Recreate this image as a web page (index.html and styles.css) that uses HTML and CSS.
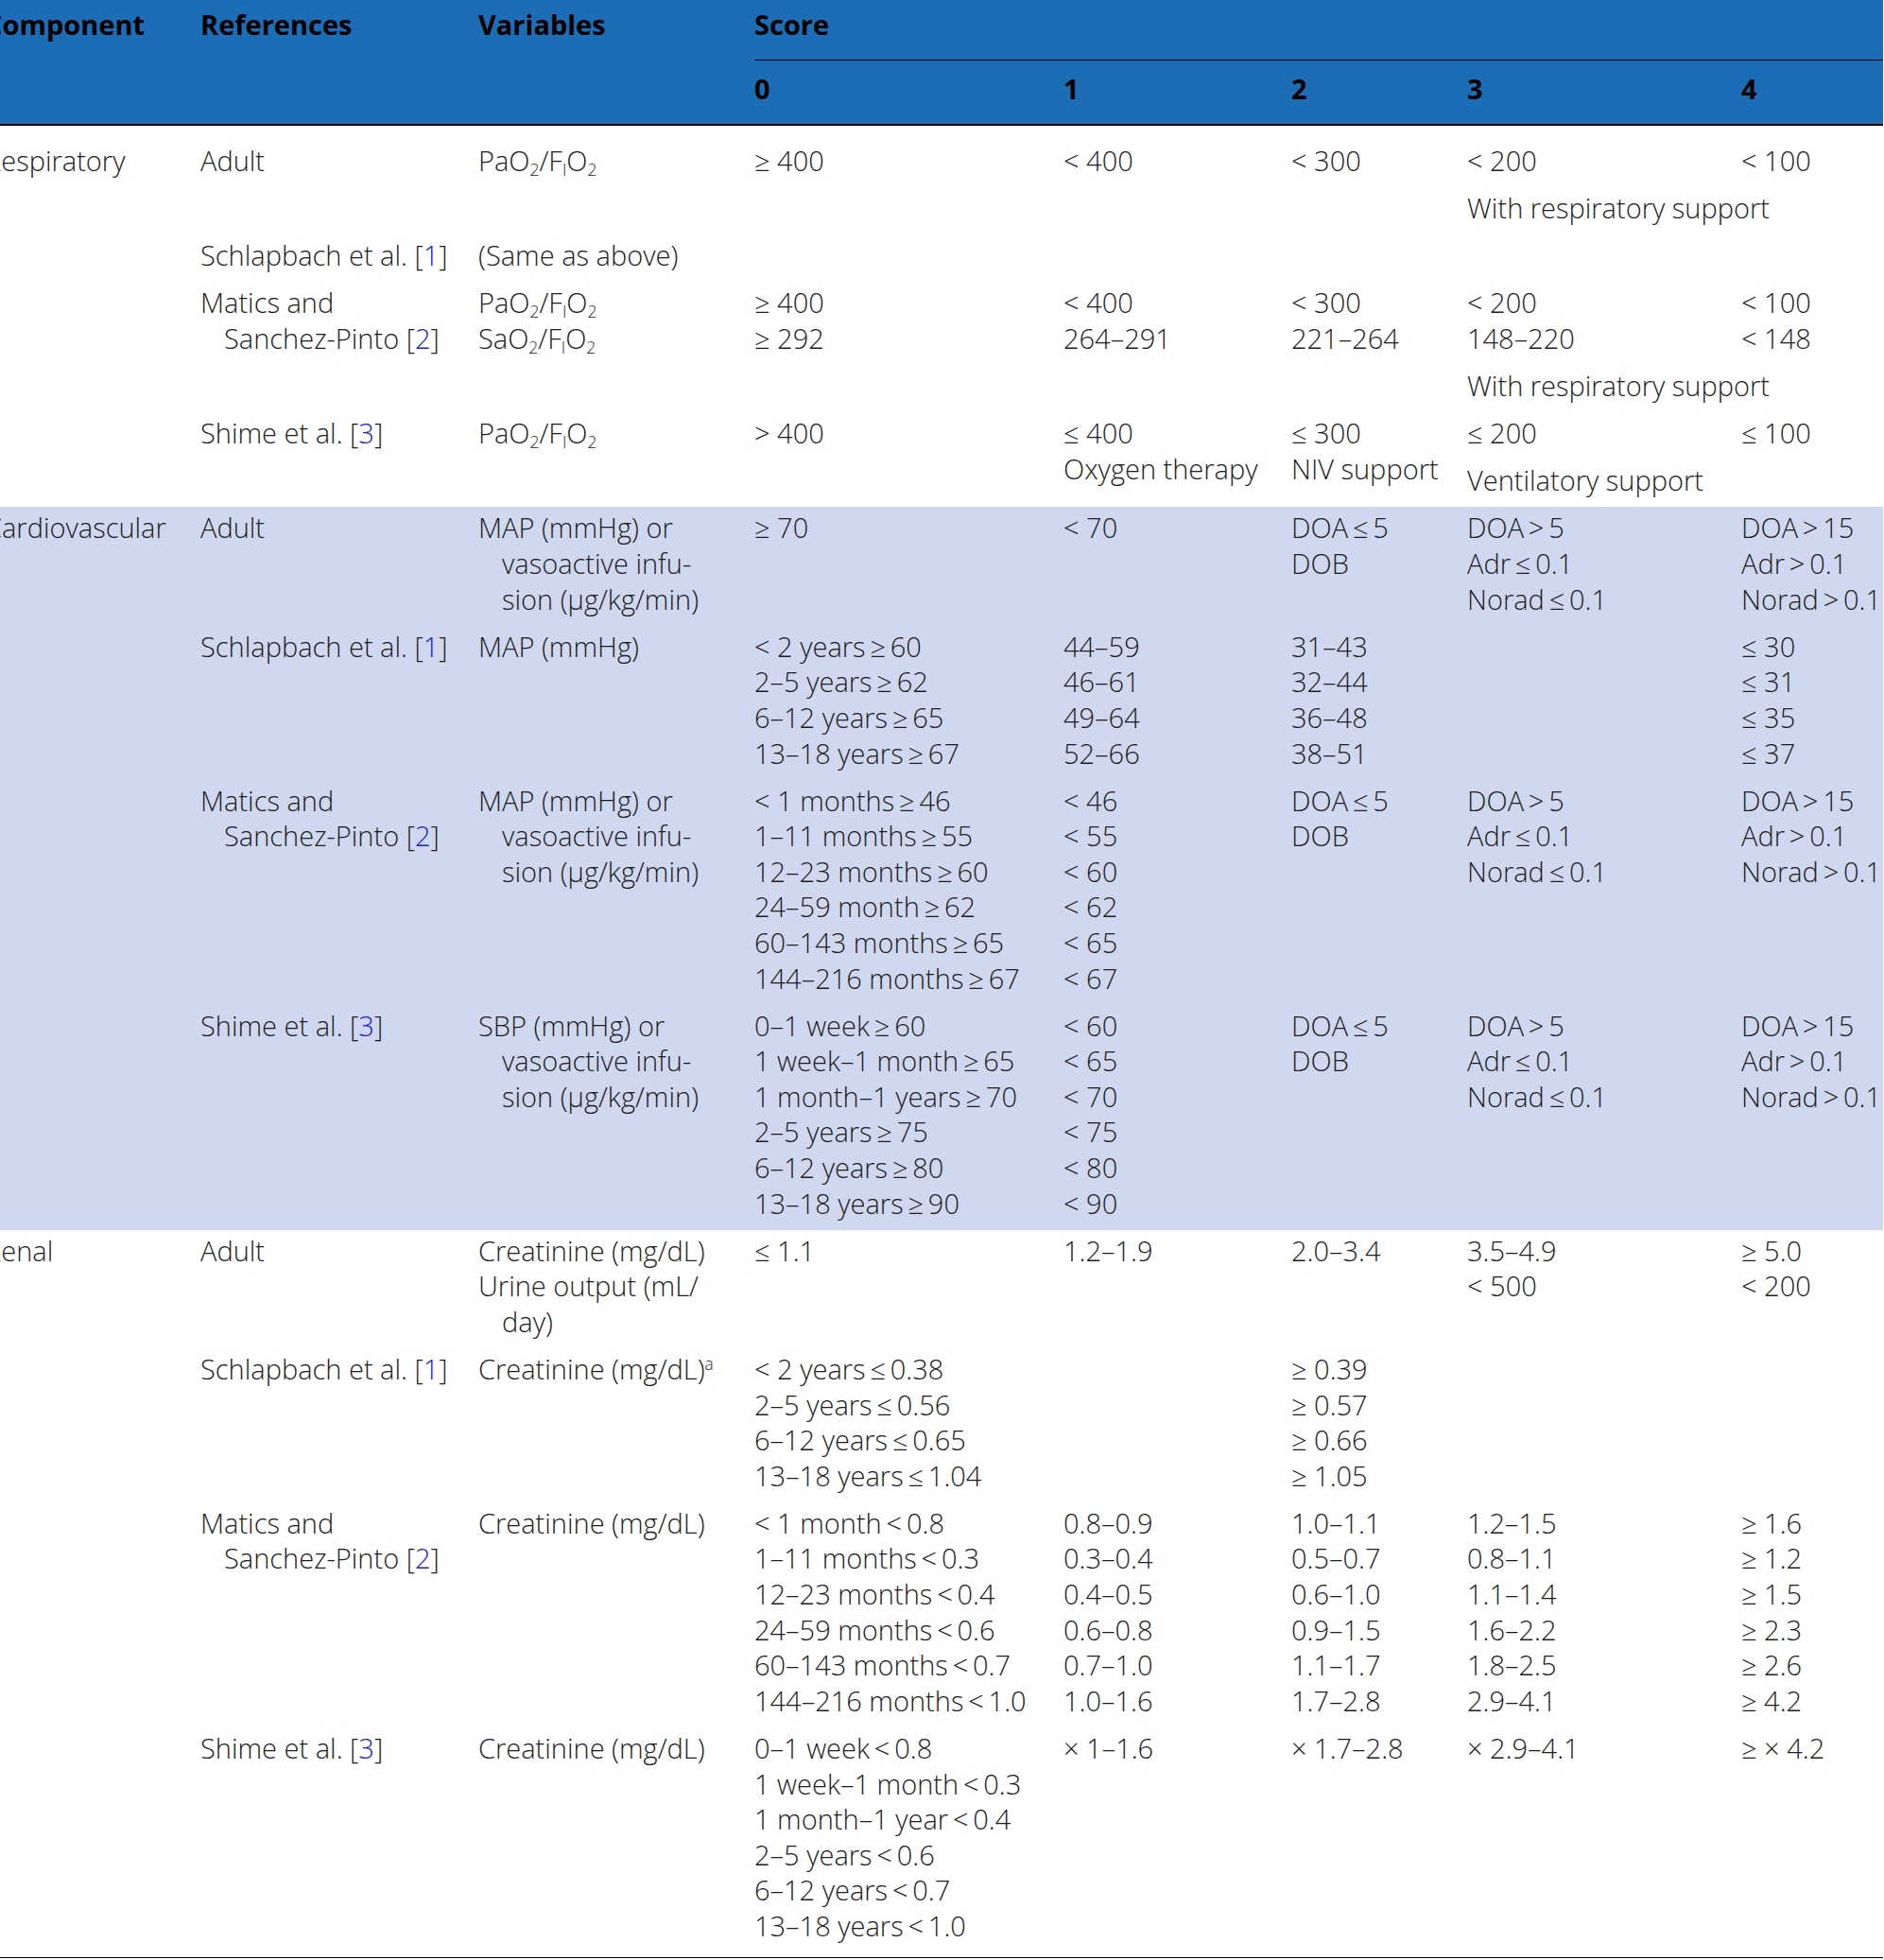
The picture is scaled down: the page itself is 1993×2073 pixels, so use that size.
FILE: index.html
```html
<!DOCTYPE html>
<html lang="en">
<head>
<meta charset="utf-8">
<title>Organ dysfunction scores</title>
<link rel="stylesheet" href="styles.css">
</head>
<body>
<table class="tbl">
  <colgroup>
    <col class="c-comp"><col class="c-ref"><col class="c-var"><col class="c-s0"><col class="c-s1"><col class="c-s2"><col class="c-s3"><col class="c-s4">
  </colgroup>
  <thead>
    <tr class="hr1">
      <th rowspan="2">Component</th>
      <th rowspan="2">References</th>
      <th rowspan="2">Variables</th>
      <th colspan="5" class="score">Score</th>
    </tr>
    <tr class="hr2">
      <th>0</th><th>1</th><th>2</th><th>3</th><th>4</th>
    </tr>
  </thead>
  <tbody>
    <!-- Respiratory -->
    <tr class="first">
      <td rowspan="7">Respiratory</td>
      <td>Adult</td>
      <td>PaO<sub class="s">2</sub>/F<sub class="s">I</sub>O<sub class="s">2</sub></td>
      <td><span class="op">≥</span> 400</td><td>&lt; 400</td><td>&lt; 300</td><td>&lt; 200</td><td>&lt; 100</td>
    </tr>
    <tr>
      <td></td><td></td><td></td><td></td><td></td>
      <td colspan="2">With respiratory support</td>
    </tr>
    <tr>
      <td>Schlapbach et al. [<span class="lk">1</span>]</td>
      <td>(Same as above)</td>
      <td></td><td></td><td></td><td></td><td></td>
    </tr>
    <tr>
      <td><div class="h">Matics and<br>Sanchez-Pinto [<span class="lk">2</span>]</div></td>
      <td>PaO<sub class="s">2</sub>/F<sub class="s">I</sub>O<sub class="s">2</sub><br>SaO<sub class="s">2</sub>/F<sub class="s">I</sub>O<sub class="s">2</sub></td>
      <td><span class="op">≥</span> 400<br><span class="op">≥</span> 292</td>
      <td>&lt; 400<br>264–291</td>
      <td>&lt; 300<br>221–264</td>
      <td>&lt; 200<br>148–220</td>
      <td>&lt; 100<br>&lt; 148</td>
    </tr>
    <tr>
      <td></td><td></td><td></td><td></td><td></td>
      <td colspan="2">With respiratory support</td>
    </tr>
    <tr>
      <td rowspan="2">Shime et al. [<span class="lk">3</span>]</td>
      <td rowspan="2">PaO<sub class="s">2</sub>/F<sub class="s">I</sub>O<sub class="s">2</sub></td>
      <td rowspan="2">&gt; 400</td>
      <td rowspan="2"><span class="op">≤</span> 400<br>Oxygen therapy</td>
      <td rowspan="2"><span class="op">≤</span> 300<br>NIV support</td>
      <td><span class="op">≤</span> 200</td>
      <td><span class="op">≤</span> 100</td>
    </tr>
    <tr>
      <td colspan="2">Ventilatory support</td>
    </tr>

    <!-- Cardiovascular -->
    <tr class="band">
      <td rowspan="4">Cardiovascular</td>
      <td>Adult</td>
      <td><div class="h">MAP (mmHg) or<br>vasoactive infu-<br>sion (µg/kg/min)</div></td>
      <td><span class="op">≥</span> 70</td>
      <td>&lt; 70</td>
      <td>DOA&thinsp;<span class="op">≤</span>&thinsp;5<br>DOB</td>
      <td>DOA&thinsp;&gt;&thinsp;5<br>Adr&thinsp;<span class="op">≤</span>&thinsp;0.1<br>Norad&thinsp;<span class="op">≤</span>&thinsp;0.1</td>
      <td>DOA&thinsp;&gt;&thinsp;15<br>Adr&thinsp;&gt;&thinsp;0.1<br>Norad&thinsp;&gt;&thinsp;0.1</td>
    </tr>
    <tr class="band">
      <td>Schlapbach et al. [<span class="lk">1</span>]</td>
      <td>MAP (mmHg)</td>
      <td>&lt; 2 years&thinsp;<span class="op">≥</span>&thinsp;60<br>2–5 years&thinsp;<span class="op">≥</span>&thinsp;62<br>6–12 years&thinsp;<span class="op">≥</span>&thinsp;65<br>13–18 years&thinsp;<span class="op">≥</span>&thinsp;67</td>
      <td>44–59<br>46–61<br>49–64<br>52–66</td>
      <td>31–43<br>32–44<br>36–48<br>38–51</td>
      <td></td>
      <td><span class="op">≤</span> 30<br><span class="op">≤</span> 31<br><span class="op">≤</span> 35<br><span class="op">≤</span> 37</td>
    </tr>
    <tr class="band">
      <td><div class="h">Matics and<br>Sanchez-Pinto [<span class="lk">2</span>]</div></td>
      <td><div class="h">MAP (mmHg) or<br>vasoactive infu-<br>sion (µg/kg/min)</div></td>
      <td>&lt; 1 months&thinsp;<span class="op">≥</span>&thinsp;46<br>1–11 months&thinsp;<span class="op">≥</span>&thinsp;55<br>12–23 months&thinsp;<span class="op">≥</span>&thinsp;60<br>24–59 month&thinsp;<span class="op">≥</span>&thinsp;62<br>60–143 months&thinsp;<span class="op">≥</span>&thinsp;65<br>144–216 months&thinsp;<span class="op">≥</span>&thinsp;67</td>
      <td>&lt; 46<br>&lt; 55<br>&lt; 60<br>&lt; 62<br>&lt; 65<br>&lt; 67</td>
      <td>DOA&thinsp;<span class="op">≤</span>&thinsp;5<br>DOB</td>
      <td>DOA&thinsp;&gt;&thinsp;5<br>Adr&thinsp;<span class="op">≤</span>&thinsp;0.1<br>Norad&thinsp;<span class="op">≤</span>&thinsp;0.1</td>
      <td>DOA&thinsp;&gt;&thinsp;15<br>Adr&thinsp;&gt;&thinsp;0.1<br>Norad&thinsp;&gt;&thinsp;0.1</td>
    </tr>
    <tr class="band">
      <td>Shime et al. [<span class="lk">3</span>]</td>
      <td><div class="h">SBP (mmHg) or<br>vasoactive infu-<br>sion (µg/kg/min)</div></td>
      <td>0–1 week&thinsp;<span class="op">≥</span>&thinsp;60<br>1 week–1 month&thinsp;<span class="op">≥</span>&thinsp;65<br>1 month–1 years&thinsp;<span class="op">≥</span>&thinsp;70<br>2–5 years&thinsp;<span class="op">≥</span>&thinsp;75<br>6–12 years&thinsp;<span class="op">≥</span>&thinsp;80<br>13–18 years&thinsp;<span class="op">≥</span>&thinsp;90</td>
      <td>&lt; 60<br>&lt; 65<br>&lt; 70<br>&lt; 75<br>&lt; 80<br>&lt; 90</td>
      <td>DOA&thinsp;<span class="op">≤</span>&thinsp;5<br>DOB</td>
      <td>DOA&thinsp;&gt;&thinsp;5<br>Adr&thinsp;<span class="op">≤</span>&thinsp;0.1<br>Norad&thinsp;<span class="op">≤</span>&thinsp;0.1</td>
      <td>DOA&thinsp;&gt;&thinsp;15<br>Adr&thinsp;&gt;&thinsp;0.1<br>Norad&thinsp;&gt;&thinsp;0.1</td>
    </tr>

    <!-- Renal -->
    <tr>
      <td rowspan="4">Renal</td>
      <td>Adult</td>
      <td><div class="h">Creatinine (mg/dL)</div><div class="h">Urine output (mL/<br>day)</div></td>
      <td><span class="op">≤</span> 1.1</td>
      <td>1.2–1.9</td>
      <td>2.0–3.4</td>
      <td>3.5–4.9<br>&lt; 500</td>
      <td><span class="op">≥</span> 5.0<br>&lt; 200</td>
    </tr>
    <tr>
      <td>Schlapbach et al. [<span class="lk">1</span>]</td>
      <td>Creatinine (mg/dL)<sup class="sp">a</sup></td>
      <td>&lt; 2 years&thinsp;<span class="op">≤</span>&thinsp;0.38<br>2–5 years&thinsp;<span class="op">≤</span>&thinsp;0.56<br>6–12 years&thinsp;<span class="op">≤</span>&thinsp;0.65<br>13–18 years&thinsp;<span class="op">≤</span>&thinsp;1.04</td>
      <td></td>
      <td><span class="op">≥</span> 0.39<br><span class="op">≥</span> 0.57<br><span class="op">≥</span> 0.66<br><span class="op">≥</span> 1.05</td>
      <td></td>
      <td></td>
    </tr>
    <tr>
      <td><div class="h">Matics and<br>Sanchez-Pinto [<span class="lk">2</span>]</div></td>
      <td>Creatinine (mg/dL)</td>
      <td>&lt; 1 month&thinsp;&lt;&thinsp;0.8<br>1–11 months&thinsp;&lt;&thinsp;0.3<br>12–23 months&thinsp;&lt;&thinsp;0.4<br>24–59 months&thinsp;&lt;&thinsp;0.6<br>60–143 months&thinsp;&lt;&thinsp;0.7<br>144–216 months&thinsp;&lt;&thinsp;1.0</td>
      <td>0.8–0.9<br>0.3–0.4<br>0.4–0.5<br>0.6–0.8<br>0.7–1.0<br>1.0–1.6</td>
      <td>1.0–1.1<br>0.5–0.7<br>0.6–1.0<br>0.9–1.5<br>1.1–1.7<br>1.7–2.8</td>
      <td>1.2–1.5<br>0.8–1.1<br>1.1–1.4<br>1.6–2.2<br>1.8–2.5<br>2.9–4.1</td>
      <td><span class="op">≥</span> 1.6<br><span class="op">≥</span> 1.2<br><span class="op">≥</span> 1.5<br><span class="op">≥</span> 2.3<br><span class="op">≥</span> 2.6<br><span class="op">≥</span> 4.2</td>
    </tr>
    <tr class="last">
      <td>Shime et al. [<span class="lk">3</span>]</td>
      <td>Creatinine (mg/dL)</td>
      <td>0–1 week&thinsp;&lt;&thinsp;0.8<br>1 week–1 month&thinsp;&lt;&thinsp;0.3<br>1 month–1 year&thinsp;&lt;&thinsp;0.4<br>2–5 years&thinsp;&lt;&thinsp;0.6<br>6–12 years&thinsp;&lt;&thinsp;0.7<br>13–18 years&thinsp;&lt;&thinsp;1.0</td>
      <td>× 1–1.6</td>
      <td>× 1.7–2.8</td>
      <td>× 2.9–4.1</td>
      <td><span class="op">≥</span> × 4.2</td>
    </tr>
  </tbody>
</table>
</body>
</html>
```

FILE: styles.css
```css
html, body {
  margin: 0;
  padding: 0;
  background: #ffffff;
}

body {
  overflow: hidden;
  font-family: "Open Sans", "Liberation Sans", sans-serif;
  font-weight: 300;
  font-size: 29px;
  line-height: 37.6px;
  color: #1e1e1e;
}

.tbl {
  margin-left: -16px;
  width: 2008px;
  table-layout: fixed;
  border-collapse: collapse;
  border-spacing: 0;
  border-bottom: 1.5px solid #000;
}

.c-comp { width: 228px; }
.c-ref  { width: 294px; }
.c-var  { width: 292px; }
.c-s0   { width: 327px; }
.c-s1   { width: 241px; }
.c-s2   { width: 186px; }
.c-s3   { width: 290px; }
.c-s4   { width: 150px; }

.tbl th,
.tbl td {
  text-align: left;
  vertical-align: top;
  white-space: nowrap;
  padding: 3px 0 9.5px 0;
}

.tbl thead th {
  background: #1c6db6;
  color: #000;
  font-weight: 700;
}

.tbl thead {
  border-bottom: 2px solid #000;
}

.hr1 th {
  padding: 7px 0 18px 0;
}

.hr1 th.score {
  border-bottom: 1.5px solid #000;
}

.hr2 th {
  padding: 11px 0 19px 0;
}

.tbl tr.first td {
  padding-top: 18px;
}

.tbl tr.last td {
  padding-bottom: 14.5px;
}

.band td {
  background: #cfd8ef;
}

.h {
  padding-left: 25px;
  text-indent: -25px;
}

.lk {
  color: #2323d6;
}

.op {
  font-size: 1em;
}

.s {
  font-size: 0.6em;
  vertical-align: -0.3em;
  line-height: 0;
}

.sp {
  font-size: 0.6em;
  vertical-align: 0.6em;
  line-height: 0;
}
```
